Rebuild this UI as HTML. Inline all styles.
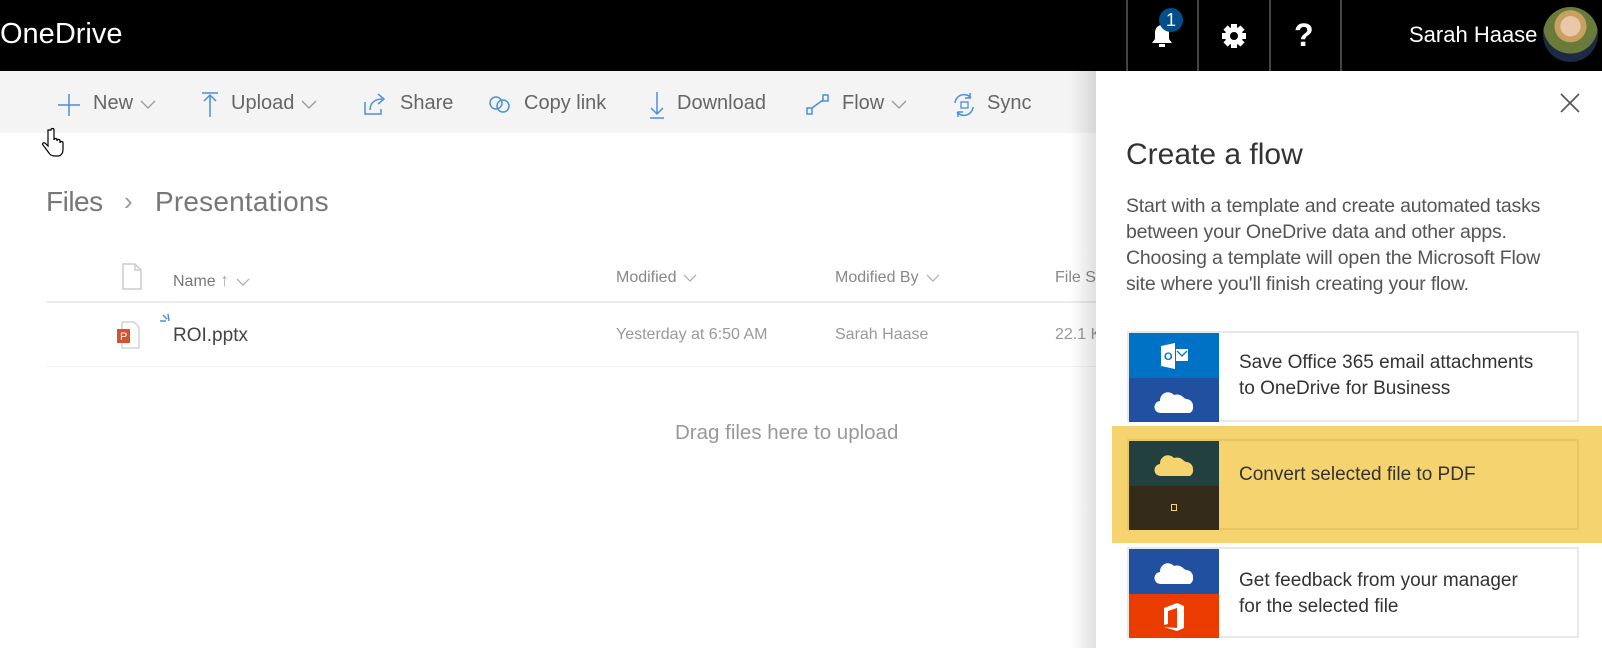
<!DOCTYPE html>
<html><head><meta charset="utf-8"><style>
*{margin:0;padding:0;box-sizing:border-box}
body{width:1602px;height:648px;overflow:hidden;background:#fff;font-family:"Liberation Sans",sans-serif;position:relative}
.a{position:absolute;white-space:nowrap}
.top{position:absolute;left:0;top:0;width:1602px;height:71px;background:#000}
.sep{position:absolute;top:0;width:2px;height:71px;background:#444}
.cmd{position:absolute;left:0;top:71px;width:1096px;height:62px;background:#f4f4f4}
.ti{position:absolute;top:92px;font-size:20px;color:#666}
.ic{position:absolute;top:90px}
.chev{display:inline-block;vertical-align:middle;margin-left:6px}
.panel{position:absolute;left:1096px;top:71px;width:506px;height:577px;background:#fff}
.shadow{position:absolute;left:1070px;top:71px;width:26px;height:577px;background:linear-gradient(to right,rgba(0,0,0,0),rgba(0,0,0,.12))}
.card{position:absolute;left:1127px;width:452px;height:91px;border:2px solid #e8e8e8;background:#fff}
.card .t{position:absolute;left:0;top:0;width:90px;height:45px}
.card .b{position:absolute;left:0;top:45px;width:90px;height:44px}
.card .tx{position:absolute;left:110px;font-size:19px;color:#333;line-height:26px}
.cl{position:absolute;left:25px;top:8px}
</style></head><body>
<div class="top"></div>
<div class="a" style="left:0;top:18px;font-size:29px;color:#fff">OneDrive</div>
<div class="sep" style="left:1126px"></div><div class="sep" style="left:1197px"></div><div class="sep" style="left:1269px"></div><div class="sep" style="left:1340px"></div>
<svg class="a" style="left:1148px;top:22px" width="28" height="28" viewBox="0 0 28 28"><path d="M14 3c-5 0-7 4-7 8v6l-3 4h20l-3-4v-6c0-4-2-8-7-8z" fill="#fff"/><rect x="11" y="22" width="6" height="3" fill="#fff"/></svg>
<div class="a" style="left:1159px;top:8px;width:24px;height:24px;border-radius:50%;background:#004e8c;color:#fff;font-size:18px;text-align:center;line-height:24px">1</div>
<svg class="a" style="left:1220px;top:22px" width="28" height="28" viewBox="0 0 28 28"><g fill="#fff"><circle cx="14" cy="14" r="9"/><rect x="11" y="2" width="6" height="24"/><rect x="2" y="11" width="24" height="6"/><rect x="11" y="2" width="6" height="24" transform="rotate(45 14 14)"/><rect x="11" y="2" width="6" height="24" transform="rotate(-45 14 14)"/></g><circle cx="14" cy="14" r="4" fill="#000"/></svg>
<div class="a" style="left:1294px;top:17px;font-size:32px;font-weight:bold;color:#fff">?</div>
<div class="a" style="left:1409px;top:22px;font-size:22px;color:#fff">Sarah Haase</div>
<div class="a" style="left:1543px;top:7px;width:55px;height:55px;border-radius:50%;background:radial-gradient(circle at 50% 35%,#e8c8a8 0 22%,#c8a060 23% 35%,#6a7a3a 36% 60%,#1d2a44 61%)"></div>

<div class="cmd"></div>
<svg class="ic" style="left:57px" width="24" height="28"><path d="M12 4v22M1 15h22" stroke="#4a90d9" stroke-width="1.5"/></svg>
<div class="ti" style="left:93px">New<svg class="chev" width="18" height="12"><path d="M2 3l7 7 7-7" stroke="#999" stroke-width="1.3" fill="none"/></svg></div>
<svg class="ic" style="left:200px" width="20" height="28"><path d="M2 3h16M10 5v22M4 11l6-6 6 6" stroke="#4a90d9" stroke-width="1.5" fill="none"/></svg>
<div class="ti" style="left:231px">Upload<svg class="chev" width="18" height="12"><path d="M2 3l7 7 7-7" stroke="#999" stroke-width="1.3" fill="none"/></svg></div>
<svg class="ic" style="left:362px" width="26" height="28"><path d="M3 12v12h16v-5M8 20c0-7 5-11 12-11M16 4l6 5-6 5" stroke="#4a90d9" stroke-width="1.5" fill="none"/></svg>
<div class="ti" style="left:400px">Share</div>
<svg class="ic" style="left:487px" width="26" height="28"><circle cx="9" cy="13" r="6" stroke="#4a90d9" stroke-width="1.5" fill="none"/><circle cx="16" cy="16" r="6" stroke="#4a90d9" stroke-width="1.5" fill="none"/></svg>
<div class="ti" style="left:524px">Copy link</div>
<svg class="ic" style="left:647px" width="20" height="30"><path d="M10 2v22M4 18l6 6 6-6M3 28h14" stroke="#4a90d9" stroke-width="1.5" fill="none"/></svg>
<div class="ti" style="left:677px">Download</div>
<svg class="ic" style="left:805px" width="26" height="28"><rect x="2" y="18" width="5" height="6" stroke="#4a90d9" stroke-width="1.5" fill="none"/><rect x="18" y="5" width="5" height="6" stroke="#4a90d9" stroke-width="1.5" fill="none"/><path d="M7 18L18 10" stroke="#4a90d9" stroke-width="1.5"/></svg>
<div class="ti" style="left:842px">Flow<svg class="chev" width="18" height="12"><path d="M2 3l7 7 7-7" stroke="#999" stroke-width="1.3" fill="none"/></svg></div>
<svg class="ic" style="left:950px" width="28" height="30"><path d="M5 13a9 9 0 0 1 16-5M23 17a9 9 0 0 1-16 5M20 3v5h-5M8 27v-5h5" stroke="#4a90d9" stroke-width="1.5" fill="none"/><rect x="11" y="12" width="7" height="6" stroke="#4a90d9" stroke-width="1.3" fill="none"/></svg>
<div class="ti" style="left:987px">Sync</div>

<svg class="a" style="left:40px;top:126px" width="26" height="34"><path d="M8 4v16l-3-3c-2-1-3 1-2 2l6 8c1 2 3 3 6 3h3c3 0 5-3 5-6v-7c0-2-3-2-3 0v-2c0-2-3-2-3 0v-1c0-2-3-2-3 0V4c0-2-3-2-3 0z" fill="#fff" stroke="#000" stroke-width="1.2"/></svg>

<div class="a" style="left:46px;top:186px;font-size:28px;color:#777;letter-spacing:-0.5px">Files</div>
<div class="a" style="left:124px;top:186px;font-size:26px;color:#999">&#8250;</div>
<div class="a" style="left:155px;top:186px;font-size:28px;color:#777;letter-spacing:0.2px">Presentations</div>

<svg class="a" style="left:121px;top:263px" width="22" height="28"><path d="M2 1h12l6 6v19H2z M14 1v6h6" stroke="#ccc" stroke-width="1.5" fill="none"/></svg>
<div class="a" style="left:173px;top:270px;font-size:16px;color:#777">Name <span style="color:#aaa;font-size:18px">&#8593;</span><svg class="chev" width="16" height="12"><path d="M2 3l6 6 6-6" stroke="#aaa" stroke-width="1.2" fill="none"/></svg></div>
<div class="a" style="left:616px;top:269px;font-size:16px;color:#888">Modified<svg class="chev" width="16" height="12"><path d="M2 3l6 6 6-6" stroke="#aaa" stroke-width="1.2" fill="none"/></svg></div>
<div class="a" style="left:835px;top:269px;font-size:16px;color:#888">Modified By<svg class="chev" width="16" height="12"><path d="M2 3l6 6 6-6" stroke="#aaa" stroke-width="1.2" fill="none"/></svg></div>
<div class="a" style="left:1055px;top:269px;font-size:16px;color:#888">File S</div>
<div class="a" style="left:46px;top:301px;width:1050px;height:2px;background:#ededed"></div>
<div class="a" style="left:46px;top:366px;width:1050px;height:1px;background:#f2f2f2"></div>

<svg class="a" style="left:116px;top:320px" width="26" height="30"><path d="M6 2h12l5 5v21H6z" fill="#fff" stroke="#ccc" stroke-width="1.3"/><rect x="1" y="9" width="13" height="14" fill="#d35230"/><text x="4" y="20" font-size="11" fill="#fff" font-family="Liberation Sans">P</text></svg>
<svg class="a" style="left:159px;top:313px" width="14" height="12"><path d="M1 8h6M9 1l1 7M4 2l4 4" stroke="#4a90d9" stroke-width="1.5"/></svg>
<div class="a" style="left:173px;top:325px;font-size:19px;color:#444">ROI.pptx</div>
<div class="a" style="left:616px;top:326px;font-size:16px;color:#999">Yesterday at 6:50 AM</div>
<div class="a" style="left:835px;top:326px;font-size:16px;color:#999">Sarah Haase</div>
<div class="a" style="left:1055px;top:326px;font-size:16px;color:#999">22.1 K</div>

<div class="a" style="left:675px;top:421px;font-size:20.5px;color:#999">Drag files here to upload</div>

<div class="shadow"></div>
<div class="panel"></div>
<svg class="a" style="left:1559px;top:92px" width="22" height="22"><path d="M2 2l18 18M20 2L2 20" stroke="#555" stroke-width="1.6"/></svg>
<div class="a" style="left:1126px;top:138px;font-size:30px;color:#333">Create a flow</div>
<div class="a" style="left:1126px;top:193px;font-size:19.5px;color:#555;line-height:26px;letter-spacing:-0.2px">Start with a template and create automated tasks<br>between your OneDrive data and other apps.<br>Choosing a template will open the Microsoft Flow<br>site where you'll finish creating your flow.</div>

<svg width="0" height="0" style="position:absolute"><defs><path id="cl" d="M7 27a6 6 0 0 1-1-12 8 8 0 0 1 14-6 9 9 0 0 1 10 3 6 6 0 0 1 2 1 7 7 0 0 1 7 7 7 7 0 0 1-3 7z"/></defs></svg>

<div class="card" style="top:331px">
<div class="t" style="background:#0072c6"><svg style="position:absolute;left:31px;top:8px" width="30" height="30"><path d="M1 5l14-3v26L1 25z" fill="#fff"/><rect x="16" y="8" width="12" height="12" fill="#fff"/><path d="M17 10l5 5 5-5" stroke="#0072c6" stroke-width="1.3" fill="none"/><text x="4" y="19" font-size="11" fill="#0072c6" font-family="Liberation Sans" font-weight="bold">O</text></svg></div>
<div class="b" style="background:#2150a0"><svg class="cl" width="40" height="30"><use href="#cl" fill="#fff"/></svg></div>
<div class="tx" style="top:17px">Save Office 365 email attachments<br>to OneDrive for Business</div>
</div>

<div class="a" style="left:1112px;top:426px;width:490px;height:117px;background:#f5d36e"></div>
<div class="card" style="top:439px;background:#f5d36e;border-color:#e8c660">
<div class="t" style="background:#21403f"><svg class="cl" width="40" height="30"><use href="#cl" fill="#f5d36e"/></svg></div>
<div class="b" style="background:#352b1a"><div style="position:absolute;left:42px;top:18px;width:6px;height:7px;border:1px solid #f5d36e"></div></div>
<div class="tx" style="top:21px">Convert selected file to PDF</div>
</div>

<div class="card" style="top:547px">
<div class="t" style="background:#2150a0"><svg class="cl" width="40" height="30"><use href="#cl" fill="#fff"/></svg></div>
<div class="b" style="background:#eb3c00"><svg style="position:absolute;left:32px;top:8px" width="26" height="30"><path d="M3 6l13-5 7 3v22l-7 3-13-4 13 1V6l-9 3v13l-4 1z" fill="#fff"/></svg></div>
<div class="tx" style="top:19px">Get feedback from your manager<br>for the selected file</div>
</div>
</body></html>
